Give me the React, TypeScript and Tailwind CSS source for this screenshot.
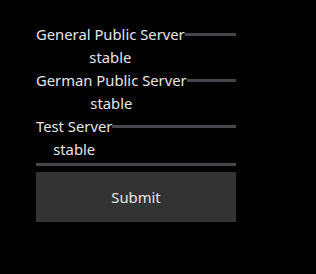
const servers = [
  { name: 'General Public Server', channel: 'stable' },
  { name: 'German Public Server', channel: 'stable' },
  { name: 'Test Server', channel: 'stable' },
]

const ServerRow = ({ name, channel }: { name: string; channel: string }) => (
  <div className="flex items-start">
    <div className="flex flex-col items-center">
      <span className="leading-[23px]">{name}</span>
      <span className="leading-[23px]">{channel}</span>
    </div>
    <div className="flex-1 h-[3px] mt-[10px] bg-[#47474b]" />
  </div>
)

const App = () => {
  return (
    <div className="w-[316px] h-[274px] bg-black text-[#e6e6e6] text-[14.8px]" style={{ fontFamily: '"Noto Sans", "Open Sans", sans-serif' }}>
      <div className="w-[200px] ml-[36px] pt-[23px] flex flex-col">
        {servers.map((s) => (
          <ServerRow key={s.name} name={s.name} channel={s.channel} />
        ))}
        <div className="h-[3px] mt-[2px] bg-[#47474b]" />
        <button className="mt-[6px] h-[50px] bg-[#333333] text-[#e6e6e6]">Submit</button>
      </div>
    </div>
  )
}

export default App
